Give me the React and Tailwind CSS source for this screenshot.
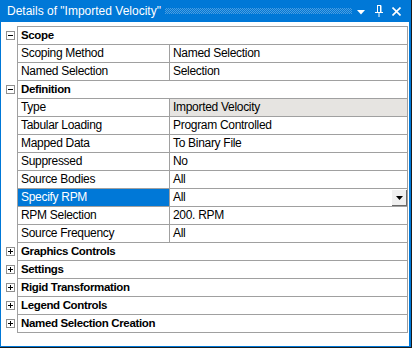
import React from 'react';

// Details panel of an "Imported Velocity" object
const rows = [
  { group: 'Scope', open: true },
  { name: 'Scoping Method', value: 'Named Selection' },
  { name: 'Named Selection', value: 'Selection' },
  { group: 'Definition', open: true },
  { name: 'Type', value: 'Imported Velocity', readOnly: true },
  { name: 'Tabular Loading', value: 'Program Controlled' },
  { name: 'Mapped Data', value: 'To Binary File' },
  { name: 'Suppressed', value: 'No' },
  { name: 'Source Bodies', value: 'All' },
  { name: 'Specify RPM', value: 'All', selected: true, dropdown: true },
  { name: 'RPM Selection', value: '200. RPM' },
  { name: 'Source Frequency', value: 'All' },
  { group: 'Graphics Controls' },
  { group: 'Settings' },
  { group: 'Rigid Transformation' },
  { group: 'Legend Controls' },
  { group: 'Named Selection Creation' },
];

function ExpandBox({ open }) {
  return (
    <svg width="9" height="9" viewBox="0 0 9 9" className="ml-[5px]">
      <rect x="0.5" y="0.5" width="8" height="8" fill="#fff" stroke="#8f8f8f" />
      <line x1="2" y1="4.5" x2="7" y2="4.5" stroke="#000" />
      {!open && <line x1="4.5" y1="2" x2="4.5" y2="7" stroke="#000" />}
    </svg>
  );
}

function TitleBar() {
  return (
    <div className="h-[22px] bg-[#0078d7] flex items-center pl-[6px] pr-[8px] text-white text-[12px]">
      <span className="whitespace-nowrap">Details of "Imported Velocity"</span>
      <div className="flex-1 h-[6px] ml-[4px] mr-[5px] bg-[conic-gradient(#4d9ee0_25%,transparent_0_50%,#4d9ee0_0_75%,transparent_0)] bg-[length:2px_2px]" />
      <svg width="8" height="5" viewBox="0 0 8 5" className="mr-[10px] mt-[2px]">
        <path d="M0 0H8L4 4.5Z" fill="#fff" />
      </svg>
      <svg width="8" height="12" viewBox="0 0 8 12" className="mr-[9px]">
        <path d="M2 0.5H6M2.5 0.5V7M5.5 0.5V7" stroke="#fff" strokeWidth="1" fill="none" />
        <rect x="5" y="0.5" width="1.5" height="6.5" fill="#fff" />
        <path d="M0 7.5H8" stroke="#fff" strokeWidth="1" />
        <path d="M4 7.5V12" stroke="#fff" strokeWidth="1" />
      </svg>
      <svg width="9" height="9" viewBox="0 0 9 9">
        <path d="M0.5 0.5L8.5 8.5M8.5 0.5L0.5 8.5" stroke="#fff" strokeWidth="1.6" />
      </svg>
    </div>
  );
}

function Row({ row, last }) {
  const cellBorder = 'border-t border-l border-r border-[#a0a0a0]' + (last ? ' border-b' : '');
  if (row.group) {
    return (
      <div className="flex h-[18px] items-stretch">
        <div className="w-[16px] flex items-center">
          <ExpandBox open={row.open} />
        </div>
        <div className={'flex-1 pl-[3px] font-bold text-[11.5px] tracking-[-0.35px] leading-[17px] ' + cellBorder + (last ? ' h-[19px]' : '')}>
          {row.group}
        </div>
      </div>
    );
  }
  return (
    <div className="flex h-[18px] items-stretch">
      <div className="w-[16px]" />
      <div className={'flex-1 flex text-[12px] tracking-[-0.3px] leading-[17px] ' + cellBorder}>
        <div className={'w-[152px] border-r border-[#a0a0a0] pl-[3px] ' + (row.selected ? 'bg-[#0078d7] text-white' : '')}>
          {row.name}
        </div>
        <div className={'flex-1 flex pl-[3px] ' + (row.readOnly ? 'bg-[#e6e4e1]' : '')}>
          <span className="flex-1">{row.value}</span>
          {row.dropdown && (
            <div className="w-[16px] bg-[#f0f0f0] border-t border-l border-white shadow-[inset_-1px_-1px_0_#696969] flex items-center justify-center">
              <svg width="7" height="4" viewBox="0 0 7 4">
                <path d="M0 0H7L3.5 4Z" fill="#000" />
              </svg>
            </div>
          )}
        </div>
      </div>
    </div>
  );
}

export default function App() {
  return (
    <div className="w-[412px] h-[348px] bg-[#1a1a1a] pr-px pb-px" style={{ fontFamily: '"Liberation Sans", Arial, sans-serif' }}>
      <div className="h-full bg-white border-l border-r-2 border-b border-[#0078d7] flex flex-col text-black">
        <TitleBar />
        <div className="mt-[4px] mr-px">
          {rows.map((r, i) => (
            <Row key={i} row={r} last={i === rows.length - 1} />
          ))}
        </div>
      </div>
    </div>
  );
}
